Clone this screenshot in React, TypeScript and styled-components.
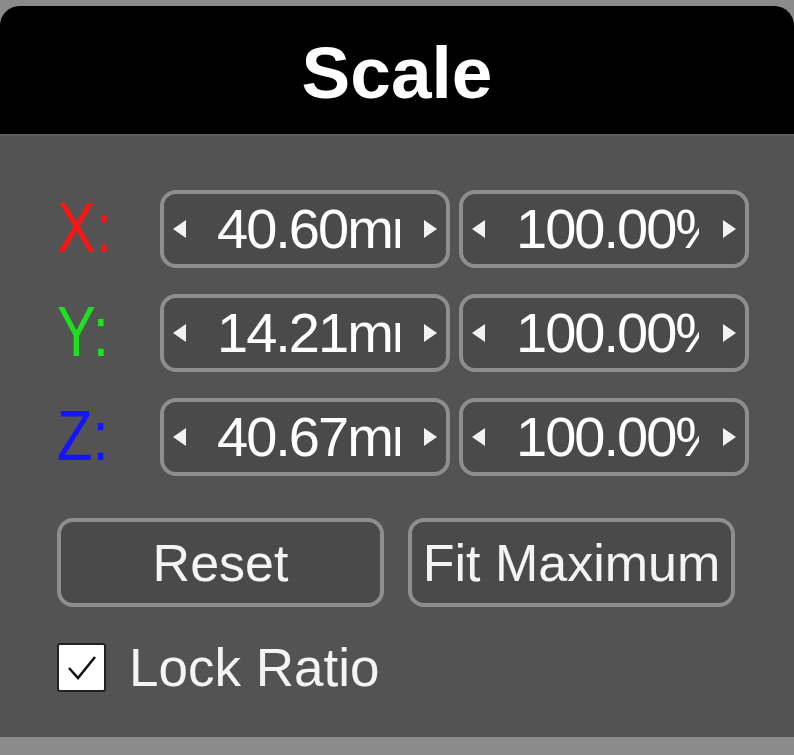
import React, { useState } from "react";
import styled, { createGlobalStyle } from "styled-components";

const GlobalStyle = createGlobalStyle`
  html, body {
    margin: 0;
    padding: 0;
    background: #8b8b8b;
    font-family: "Liberation Sans", Arial, sans-serif;
  }
`;

const Page = styled.div`
  width: 794px;
  height: 755px;
  padding-top: 6px;
  box-sizing: border-box;
  overflow: hidden;
`;

const Panel = styled.section`
  width: 794px;
  height: 731px;
  display: flex;
  flex-direction: column;
  border-radius: 20px 20px 0 0;
  overflow: hidden;
  background: #535353;
`;

const Header = styled.header`
  height: 130px;
  flex: none;
  display: flex;
  align-items: center;
  justify-content: center;
  background: #000;
  border-bottom: 2px solid #5e5e5e;
  box-sizing: border-box;
  color: #fff;
  font-weight: bold;
  font-size: 73px;
  padding-top: 4px;
`;

const Body = styled.div`
  flex: 1;
  display: flex;
  flex-direction: column;
  padding: 54px 0 0 57px;
`;

const Row = styled.div`
  display: flex;
  align-items: center;
  height: 78px;
  margin-bottom: 26px;
`;

// the source UI draws the axis letters in a condensed face
const AxisLabel = styled.span<{ $color: string }>`
  width: 103px;
  flex: none;
  font-size: 71px;
  line-height: 1;
  color: ${(p) => p.$color};
  margin-top: -4px;

  span {
    display: inline-block;
    transform: scaleX(0.82);
    transform-origin: left center;
  }
`;

const Spin = styled.div`
  width: 290px;
  height: 78px;
  box-sizing: border-box;
  flex: none;
  display: flex;
  align-items: center;
  padding: 0 9px;
  border: 4px solid #8e8e8e;
  border-radius: 16px;
  background: #4a4a4a;
  & + & {
    margin-left: 9px;
  }
`;

const Arrow = styled.span<{ $dir: "left" | "right" }>`
  flex: none;
  width: 0;
  height: 0;
  border-top: 9px solid transparent;
  border-bottom: 9px solid transparent;
  ${(p) =>
    p.$dir === "left"
      ? `border-right: 13px solid #f2f2f2; margin-right: 31px;`
      : `border-left: 13px solid #f2f2f2; margin-left: 24px;`}
`;

const Field = styled.span`
  flex: 1;
  min-width: 0;
  overflow: hidden;
  white-space: nowrap;
  color: #fff;
  font-size: 56px;
  letter-spacing: -2px;
  line-height: 1;
`;

const Buttons = styled.div`
  display: flex;
  gap: 24px;
  margin-top: 16px;
`;

const Button = styled.button`
  width: 327px;
  height: 89px;
  box-sizing: border-box;
  border: 4px solid #8e8e8e;
  border-radius: 16px;
  background: #4a4a4a;
  color: #f4f4f4;
  font-family: "Liberation Sans", Arial, sans-serif;
  font-size: 52px;
  padding: 0;
  white-space: nowrap;
`;

const CheckRow = styled.label`
  display: flex;
  align-items: center;
  margin-top: 30px;
  color: #f4f4f4;
  font-size: 53px;
`;

const Box = styled.span`
  width: 49px;
  height: 49px;
  box-sizing: border-box;
  flex: none;
  display: flex;
  align-items: center;
  justify-content: center;
  background: #fff;
  border: 2px solid #222;
  border-radius: 3px;
  margin-right: 23px;
`;

const axes = [
  { name: "X", color: "#ff1414", mm: "40.60mm" },
  { name: "Y", color: "#1ee01e", mm: "14.21mm" },
  { name: "Z", color: "#1414ff", mm: "40.67mm" },
];

const SpinBox: React.FC<{ value: string }> = ({ value }) => (
  <Spin>
    <Arrow $dir="left" />
    <Field>{value}</Field>
    <Arrow $dir="right" />
  </Spin>
);

const App: React.FC = () => {
  const [locked, setLocked] = useState(true);
  return (
    <Page>
      <GlobalStyle />
      <Panel>
        <Header>Scale</Header>
        <Body>
          {axes.map((a) => (
            <Row key={a.name}>
              <AxisLabel $color={a.color}>
                <span>{a.name}:</span>
              </AxisLabel>
              <SpinBox value={a.mm} />
              <SpinBox value="100.00%" />
            </Row>
          ))}
          <Buttons>
            <Button>Reset</Button>
            <Button>Fit Maximum</Button>
          </Buttons>
          <CheckRow onClick={() => setLocked(!locked)}>
            <Box>
              {locked && (
                <svg width="34" height="30" viewBox="0 0 34 30">
                  <path d="M4 15 L13 25 L30 4" fill="none" stroke="#111" strokeWidth="2.5" />
                </svg>
              )}
            </Box>
            Lock Ratio
          </CheckRow>
        </Body>
      </Panel>
    </Page>
  );
};

export default App;
